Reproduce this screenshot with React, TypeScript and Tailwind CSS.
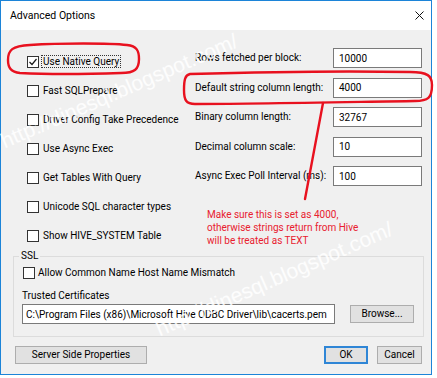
import React from "react";

const ui = "font-['Roboto',sans-serif] text-[10px] text-black";

const leftOptions = [
  "Use Native Query",
  "Fast SQLPrepare",
  "Driver Config Take Precedence",
  "Use Async Exec",
  "Get Tables With Query",
  "Unicode SQL character types",
  "Show HIVE_SYSTEM Table",
];

const rightFields: [string, string][] = [
  ["Rows fetched per block:", "10000"],
  ["Default string column length:", "4000"],
  ["Binary column length:", "32767"],
  ["Decimal column scale:", "10"],
  ["Async Exec Poll Interval (ms):", "100"],
];

function Check({ checked = false }: { checked?: boolean }) {
  return (
    <span className="w-[12px] h-[12px] shrink-0 border border-[#333333] bg-white flex items-center justify-center">
      {checked && (
        <svg width="10" height="10" viewBox="0 0 10 10">
          <path d="M1.5 5 L4 7.5 L8.5 2" fill="none" stroke="#1a1a1a" strokeWidth="1.2" />
        </svg>
      )}
    </span>
  );
}

function Btn({ label, className }: { label: string; className: string }) {
  return (
    <div
      className={
        "h-[18px] bg-[#e1e1e1] border flex items-center justify-center leading-[12px] " +
        className
      }
    >
      {label}
    </div>
  );
}

export default function App() {
  return (
    <div className={"relative w-[437px] h-[378px] bg-white overflow-hidden " + ui}>
      <div className="w-[432px] h-[375px] border border-[#1c84d8] bg-[#f0f0f0] flex flex-col">
        {/* title bar */}
        <div className="h-[29px] bg-white flex items-center justify-between pl-[9px]">
          <span className="text-[10.5px] leading-[12px]">Advanced Options</span>
          <svg width="9" height="9" viewBox="0 0 9 9" className="mr-[7px]">
            <path d="M0.5 0.5 L8.5 8.5 M8.5 0.5 L0.5 8.5" stroke="#111" strokeWidth="1" />
          </svg>
        </div>

        <div className="flex-1 flex flex-col">
          <div className="flex items-start">
            {/* checkboxes */}
            <div className="ml-[26px] mt-[17px] w-[168px] flex flex-col">
              {leftOptions.map((o, i) => (
                <div key={o} className="h-[29px] flex items-center gap-[2px]">
                  <Check checked={i === 0} />
                  <span
                    className={
                      "leading-[11px] px-[1px] border " +
                      (i === 0 ? "border-dotted border-[#333333]" : "border-transparent")
                    }
                  >
                    {o}
                  </span>
                </div>
              ))}
            </div>

            {/* numeric fields */}
            <div className="mt-[18px] flex flex-col">
              <div className="grid grid-cols-[138px_89px] gap-y-[9.5px] items-center">
                {rightFields.map(([l, v]) => (
                  <React.Fragment key={l}>
                    <span className="leading-[12px]">{l}</span>
                    <div className="h-[20px] border border-[#7a7a7a] bg-white pl-[5px] flex items-center">
                      {v}
                    </div>
                  </React.Fragment>
                ))}
              </div>
              <div className="ml-[12px] mt-[22px] leading-[13px] text-[#e8202f]">
                <div>Make sure this is set as 4000,</div>
                <div>otherwise strings return from Hive</div>
                <div>will be treated as TEXT</div>
              </div>
            </div>
          </div>

          {/* SSL group */}
          <fieldset className="ml-[12px] w-[411px] border border-[#dcdcdc]">
            <legend className="ml-[5px] px-[2px] leading-[12px]">SSL</legend>
            <div className="pl-[8px] pr-[8px] pb-[12px] flex flex-col">
              <div className="mt-[2px] h-[18px] ml-[1px] flex items-center gap-[3px]">
                <Check />
                <span className="leading-[12px]">Allow Common Name Host Name Mismatch</span>
              </div>
              <div className="mt-[7px] leading-[14px]">Trusted Certificates</div>
              <div className="mt-[1px] flex items-start gap-[15px]">
                <div className="w-[313px] h-[20px] border border-[#7a7a7a] bg-white pl-[3px] flex items-center whitespace-nowrap overflow-hidden">
                  C:\Program Files (x86)\Microsoft Hive ODBC Driver\lib\cacerts.pem
                </div>
                <Btn label="Browse..." className="mt-[1px] w-[64px] border-[#adadad]" />
              </div>
            </div>
          </fieldset>

          {/* bottom buttons */}
          <div className="mt-[9px] pb-[9px] flex items-center">
            <Btn label="Server Side Properties" className="ml-[14px] w-[132px] border-[#adadad]" />
            <div className="flex-1" />
            <Btn label="OK" className="w-[44px] border-2 border-[#2f86d6]" />
            <Btn label="Cancel" className="ml-[9px] mr-[9px] w-[45px] border-[#adadad]" />
          </div>
        </div>
      </div>

      {/* blog watermark */}
      <span className="absolute left-[2px] top-[131px] origin-left -rotate-[23.5deg] font-['Liberation_Sans',sans-serif] text-[21px] leading-[22px] text-white/85 whitespace-nowrap pointer-events-none">
        http://dinesql.blogspot.com/
      </span>
      <span className="absolute left-[157px] top-[319px] origin-left -rotate-[23.5deg] font-['Liberation_Sans',sans-serif] text-[21px] leading-[22px] text-white/85 whitespace-nowrap pointer-events-none">
        http://dinesql.blogspot.com/
      </span>

      {/* red annotations */}
      <svg
        className="absolute left-0 top-0 pointer-events-none"
        width="437"
        height="378"
        viewBox="0 0 437 378"
      >
        <g fill="none" stroke="#e8111f" strokeWidth="2.4" strokeLinecap="round">
          <path d="M30 45 C60 43 110 43 127 45 C137 46 139 51 139 59 C139 69 135 73 121 73 C90 74 40 74 20 73 C11 72 8 68 8 60 C8 50 12 46 30 45 Z" />
          <path d="M190 74 C260 72 360 71 410 72 C428 72 432 76 432 85 C432 98 428 101 415 101 C350 102 250 104 195 104 C186 104 184 100 184 90 C184 80 185 75 190 74 Z" />
          <path d="M323 103 L305 199" />
        </g>
      </svg>
    </div>
  );
}
